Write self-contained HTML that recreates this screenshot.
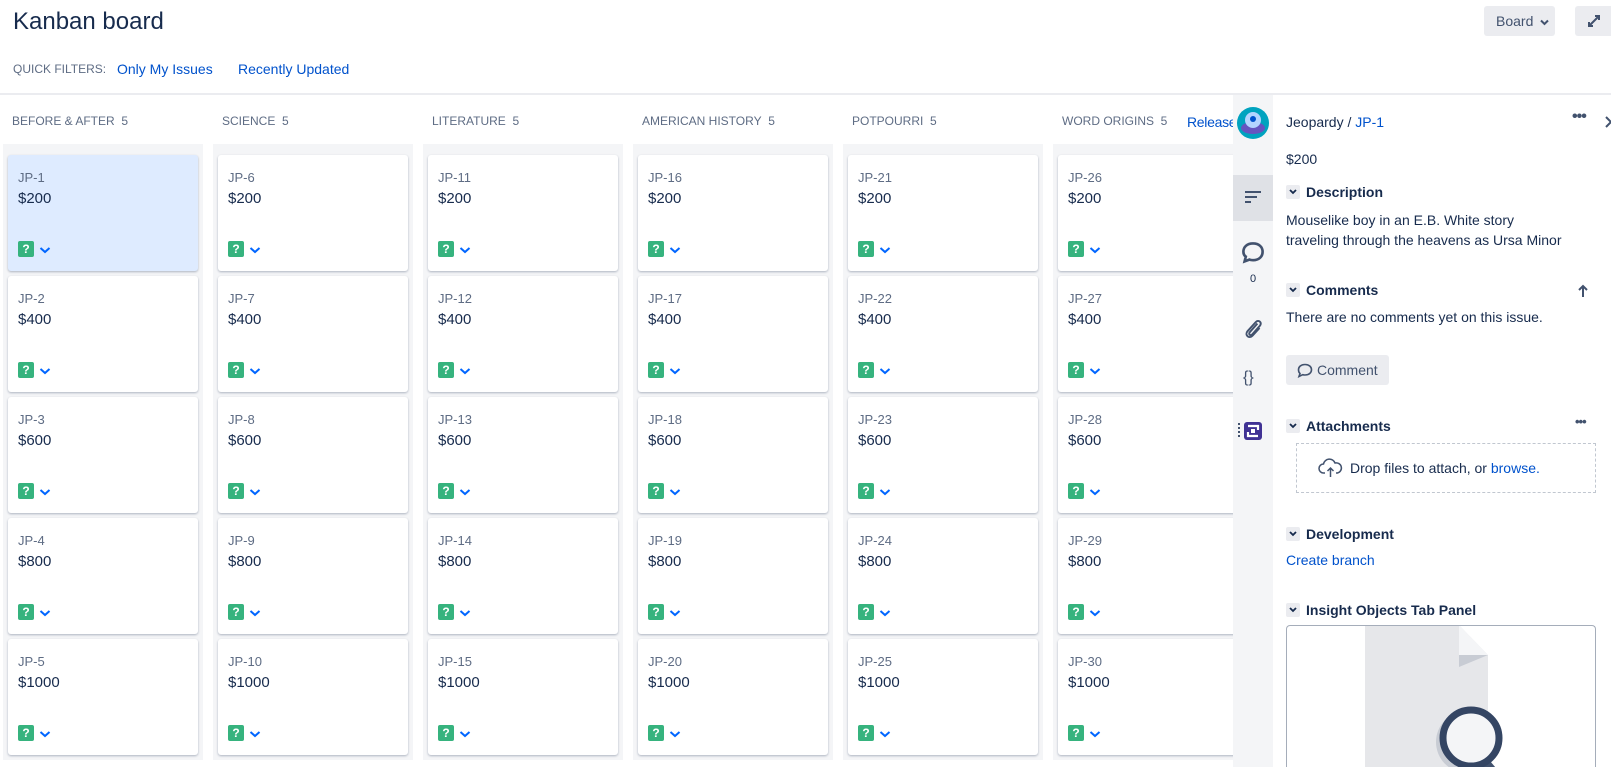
<!DOCTYPE html>
<html style="width:1611px;height:767px;overflow:hidden"><head><meta charset="utf-8"><style>
*{box-sizing:border-box;margin:0;padding:0}
body{width:1611px;height:767px;overflow:hidden;background:#fff;font-family:"Liberation Sans",sans-serif;color:#172b4d;position:relative}
.a{position:absolute;white-space:nowrap}
.col{position:absolute;top:144px;width:200px;height:616px;background:#f4f5f7}
.hd{position:absolute;top:114px;font-size:12px;color:#5e6c84;text-transform:uppercase}
.card{position:absolute;width:190px;height:116px;background:#fff;border-radius:3px;box-shadow:0 1px 2px rgba(9,30,66,.3)}
.card .id{position:absolute;left:10px;top:15px;font-size:13px;color:#5e6c84}
.card .t{position:absolute;left:10px;top:35px;font-size:15px;color:#172b4d}
.card .q{position:absolute;left:10px;top:86px;width:16px;height:16px;background:#36b37e;border-radius:2px;color:#fff;font-size:12px;font-weight:bold;text-align:center;line-height:16px}
.card svg{position:absolute;left:31px;top:91px}
.sec{position:absolute;left:1286px;font-size:14px;font-weight:bold;color:#172b4d;white-space:nowrap}
.chev{position:absolute;left:1286px;width:14px;height:14px;background:#ebecf0;border-radius:2px}
.chev svg{position:absolute;left:3px;top:4px}
.sec span{position:absolute;left:20px;white-space:nowrap}
</style></head><body>
<div class="a" style="left:13px;top:8px;font-size:24px;color:#172b4d">Kanban board</div>
<div class="a" style="left:13px;top:62px;font-size:12px;color:#5e6c84">QUICK FILTERS:</div>
<div class="a" style="left:117px;top:61px;font-size:14px;color:#0052cc">Only My Issues</div>
<div class="a" style="left:238px;top:61px;font-size:14px;color:#0052cc">Recently Updated</div>
<div class="a" style="left:1484px;top:6px;width:71px;height:30px;background:#ebecf0;border-radius:3px;font-size:14px;padding:7px 0 0 12px;color:#42526e">Board <svg width="9" height="7" viewBox="0 0 9 7" style="margin-left:3px"><path d="M1 1.5l3.5 3.5 3.5-3.5" stroke="#42526e" stroke-width="2" fill="none"/></svg></div>
<div class="a" style="left:1575px;top:6px;width:36px;height:30px;background:#ebecf0;border-radius:3px 0 0 3px"><svg width="16" height="16" viewBox="0 0 16 16" style="position:absolute;left:11px;top:7px"><path d="M3 13L13 3M9 3h4v4M3 9v4h4" stroke="#42526e" stroke-width="2" fill="none"/></svg></div>
<div class="a" style="left:0;top:93px;width:1611px;height:2px;background:#ebecf0"></div>

<div id="board"></div>
<script>
var names=["BEFORE &amp; AFTER","SCIENCE","LITERATURE","AMERICAN HISTORY","POTPOURRI","WORD ORIGINS"];
var vals=["$200","$400","$600","$800","$1000"];var h="";
for(var i=0;i<6;i++){var x=3+210*i;
h+='<div class="col" style="left:'+x+'px"></div><div class="hd a" style="left:'+(x+9)+'px">'+names[i]+'&nbsp; 5</div>';
for(var j=0;j<5;j++){h+='<div class="card" style="left:'+(x+5)+'px;top:'+(155+121*j)+'px;'+(i==0&&j==0?'background:#deebff':'')+'"><div class="id">JP-'+(i*5+j+1)+'</div><div class="t">'+vals[j]+'</div><div class="q">?</div><svg width="12" height="8" viewBox="0 0 12 8"><path d="M1.5 2l4.5 4 4.5-4" stroke="#0065ff" stroke-width="2" fill="none"/></svg></div>';}}
document.getElementById('board').innerHTML=h;
</script>
<div class="a" style="left:1233px;top:95px;width:378px;height:672px;background:#fff"></div>
<div class="a" style="left:1185px;top:114px;font-size:14px;letter-spacing:-0.3px;color:#0052cc;background:#fff;padding-left:2px">Release</div>
<div class="a" style="left:1233px;top:95px;width:40px;height:672px;background:#f4f5f7"></div>
<div class="a" style="left:1233px;top:175px;width:40px;height:46px;background:#dfe1e6"></div>
<svg class="a" style="left:1236px;top:106px" width="34" height="34" viewBox="0 0 34 34"><circle cx="17" cy="17" r="16" fill="#00a3bf"/><ellipse cx="17" cy="22" rx="12" ry="6" fill="#6554c0"/><circle cx="17" cy="14" r="8" fill="#b3d4ff"/><circle cx="17" cy="13" r="3" fill="#0052cc"/></svg>
<svg class="a" style="left:1244px;top:190px" width="18" height="14" viewBox="0 0 18 14"><path d="M1 2h16M1 7h12M1 12h6" stroke="#42526e" stroke-width="2"/></svg>
<svg class="a" style="left:1241px;top:241px" width="24" height="24" viewBox="0 0 20 20"><path d="M10 2c5 0 8 3 8 7s-3 7-8 7c-1 0-2 0-3-.5L3 17l1-4C2.5 12 2 10.5 2 9c0-4 3-7 8-7z" stroke="#42526e" stroke-width="2.2" fill="none"/></svg>
<div class="a" style="left:1250px;top:273px;font-size:11px;color:#172b4d">0</div>
<svg class="a" style="left:1243px;top:317px" width="20" height="24" viewBox="0 0 18 22"><path d="M13 6l-7 8c-1.5 1.7 .8 3.7 2.3 2l7-8c2.5-3-1.3-6-3.8-3.3L4 13c-3 3.6 1.5 7.5 4.6 4L15 10" stroke="#42526e" stroke-width="1.8" fill="none"/></svg>
<div class="a" style="left:1243px;top:369px;font-size:16px;color:#42526e">{}</div>
<div class="a" style="left:1238px;top:423px;width:2px;height:14px;border-left:2px dotted #42526e"></div>
<svg class="a" style="left:1244px;top:422px" width="18" height="18" viewBox="0 0 18 18"><rect width="18" height="18" rx="3" fill="#403294"/><path d="M4 4h10v4M14 14H4v-4" stroke="#fff" stroke-width="2.2" fill="none"/><rect x="7" y="7" width="4" height="4" fill="#fff"/></svg>

<div class="a" style="left:1286px;top:114px;font-size:14px">Jeopardy / <span style="color:#0052cc">JP-1</span></div>
<div class="a" style="left:1572px;top:108px;font-size:16px;font-weight:bold;letter-spacing:-1px;color:#42526e">•••</div>
<div class="a" style="left:1286px;top:151px;font-size:14px">$200</div>
<div class="chev" style="top:185px"><svg width="8" height="6" viewBox="0 0 8 6"><path d="M1 1l3 3 3-3" stroke="#172b4d" stroke-width="1.8" fill="none"/></svg></div>
<div class="sec" style="top:184px"><span>Description</span></div>
<div class="a" style="left:1286px;top:210px;font-size:14px;line-height:20px">Mouselike boy in an E.B. White story<br>traveling through the heavens as Ursa Minor</div>
<div class="chev" style="top:283px"><svg width="8" height="6" viewBox="0 0 8 6"><path d="M1 1l3 3 3-3" stroke="#172b4d" stroke-width="1.8" fill="none"/></svg></div>
<div class="sec" style="top:282px"><span>Comments</span></div>
<svg class="a" style="left:1578px;top:284px" width="10" height="14" viewBox="0 0 10 14"><path d="M5 13V2M1 6l4-4 4 4" stroke="#42526e" stroke-width="2" fill="none"/></svg>
<div class="a" style="left:1286px;top:309px;font-size:14px">There are no comments yet on this issue.</div>
<div class="a" style="left:1286px;top:355px;width:103px;height:30px;background:#ebecf0;border-radius:3px;font-size:14px;padding:7px 0 0 31px;color:#42526e">Comment</div>
<svg class="a" style="left:1297px;top:363px" width="16" height="15" viewBox="0 0 16 15"><path d="M8 1.5c4 0 6.5 2.3 6.5 5.3S12 12 8 12c-.8 0-1.6-.1-2.3-.3L2 13.5l1-3C2 9.7 1.5 8.3 1.5 6.8 1.5 3.8 4 1.5 8 1.5z" stroke="#42526e" stroke-width="1.6" fill="none"/></svg>
<div class="chev" style="top:419px"><svg width="8" height="6" viewBox="0 0 8 6"><path d="M1 1l3 3 3-3" stroke="#172b4d" stroke-width="1.8" fill="none"/></svg></div>
<div class="sec" style="top:418px"><span>Attachments</span></div>
<div class="a" style="left:1575px;top:414px;font-size:13px;font-weight:bold;letter-spacing:-1px;color:#42526e">•••</div>
<div class="a" style="left:1296px;top:443px;width:300px;height:50px;border:1px dashed #c1c7d0"></div>
<svg class="a" style="left:1318px;top:457px" width="25" height="22" viewBox="0 0 25 22"><path d="M7 16H5.5a4.5 4.5 0 0 1 0-9 6 6 0 0 1 11.5-1 5 5 0 0 1 2.5 10H18M12.5 20v-9M9.5 14l3-3 3 3" stroke="#42526e" stroke-width="1.5" fill="none"/></svg>
<div class="a" style="left:1350px;top:460px;font-size:14px">Drop files to attach, or <span style="color:#0052cc">browse.</span></div>
<div class="chev" style="top:527px"><svg width="8" height="6" viewBox="0 0 8 6"><path d="M1 1l3 3 3-3" stroke="#172b4d" stroke-width="1.8" fill="none"/></svg></div>
<div class="sec" style="top:526px"><span>Development</span></div>
<div class="a" style="left:1286px;top:552px;font-size:14px;color:#0052cc">Create branch</div>
<div class="chev" style="top:603px"><svg width="8" height="6" viewBox="0 0 8 6"><path d="M1 1l3 3 3-3" stroke="#172b4d" stroke-width="1.8" fill="none"/></svg></div>
<div class="sec" style="top:602px"><span>Insight Objects Tab Panel</span></div>
<div class="a" style="left:1286px;top:625px;width:310px;height:142px;border:1px solid #a5adba;border-bottom:none;border-radius:4px 4px 0 0;overflow:hidden">
<svg width="310" height="142" viewBox="1286 625 310 142" style="position:absolute;left:-1px;top:-1px"><path d="M1365 625h94l29 30v120h-123z" fill="#e6e7ea"/><path d="M1459 625l29 30h-29z" fill="#f4f5f7"/><path d="M1459 655h29l-29 12z" fill="#c8ccd4"/><circle cx="1467" cy="742" r="31" fill="#c8ccd4"/><path d="M1486 764l22 26" stroke="#42526e" stroke-width="10"/><circle cx="1471" cy="738" r="28" fill="#f4f5f7" stroke="#344563" stroke-width="7"/></svg></div>
<svg class="a" style="left:1605px;top:116px" width="6" height="12" viewBox="0 0 6 12"><path d="M1 1l5 5-5 5" stroke="#42526e" stroke-width="2" fill="none"/></svg>
</body></html>
